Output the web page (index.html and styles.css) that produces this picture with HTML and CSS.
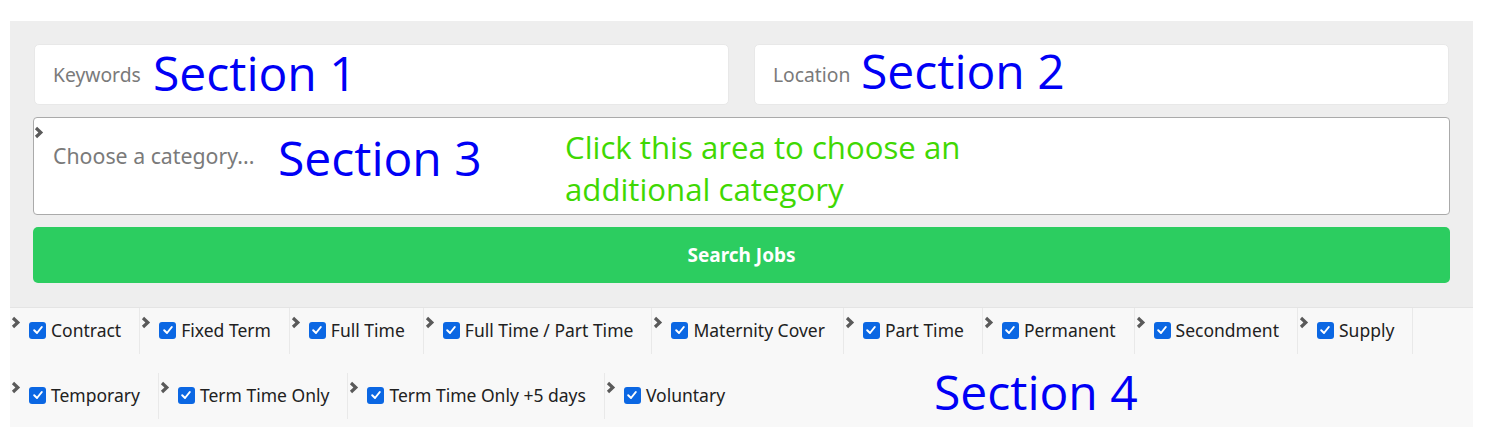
FILE: index.html
```html
<!DOCTYPE html>
<html lang="en">
<head>
<meta charset="utf-8">
<title>Job search</title>
<link rel="stylesheet" href="styles.css">
</head>
<body>
<div class="page">
  <form class="search">
    <div class="fields">
      <div class="field">
        <span class="placeholder">Keywords</span>
        <span class="note note-blue note-s1">Section 1</span>
      </div>
      <div class="field">
        <span class="placeholder">Location</span>
        <span class="note note-blue note-s2">Section 2</span>
      </div>
    </div>
    <div class="category">
      <svg class="chev" viewBox="0 0 10 13" width="10" height="13"><polyline points="2,2 6.8,6.5 2,11" /></svg>
      <span class="category-ph">Choose a category...</span>
      <span class="note note-blue note-s3">Section 3</span>
      <span class="note note-green">Click this area to choose an<br>additional category</span>
    </div>
    <button type="button" class="btn">Search Jobs</button>
  </form>
  <div class="types">
    <div class="type"><svg class="chev" viewBox="0 0 10 13" width="10" height="13"><polyline points="2,2 6.8,6.5 2,11" /></svg><span class="box"><svg viewBox="0 0 12 12" width="12" height="12"><polyline points="2.2,6.3 5,9 9.8,3" /></svg></span><span class="lbl">Contract</span></div>
    <div class="type"><svg class="chev" viewBox="0 0 10 13" width="10" height="13"><polyline points="2,2 6.8,6.5 2,11" /></svg><span class="box"><svg viewBox="0 0 12 12" width="12" height="12"><polyline points="2.2,6.3 5,9 9.8,3" /></svg></span><span class="lbl">Fixed Term</span></div>
    <div class="type"><svg class="chev" viewBox="0 0 10 13" width="10" height="13"><polyline points="2,2 6.8,6.5 2,11" /></svg><span class="box"><svg viewBox="0 0 12 12" width="12" height="12"><polyline points="2.2,6.3 5,9 9.8,3" /></svg></span><span class="lbl">Full Time</span></div>
    <div class="type"><svg class="chev" viewBox="0 0 10 13" width="10" height="13"><polyline points="2,2 6.8,6.5 2,11" /></svg><span class="box"><svg viewBox="0 0 12 12" width="12" height="12"><polyline points="2.2,6.3 5,9 9.8,3" /></svg></span><span class="lbl">Full Time / Part Time</span></div>
    <div class="type"><svg class="chev" viewBox="0 0 10 13" width="10" height="13"><polyline points="2,2 6.8,6.5 2,11" /></svg><span class="box"><svg viewBox="0 0 12 12" width="12" height="12"><polyline points="2.2,6.3 5,9 9.8,3" /></svg></span><span class="lbl">Maternity Cover</span></div>
    <div class="type"><svg class="chev" viewBox="0 0 10 13" width="10" height="13"><polyline points="2,2 6.8,6.5 2,11" /></svg><span class="box"><svg viewBox="0 0 12 12" width="12" height="12"><polyline points="2.2,6.3 5,9 9.8,3" /></svg></span><span class="lbl">Part Time</span></div>
    <div class="type"><svg class="chev" viewBox="0 0 10 13" width="10" height="13"><polyline points="2,2 6.8,6.5 2,11" /></svg><span class="box"><svg viewBox="0 0 12 12" width="12" height="12"><polyline points="2.2,6.3 5,9 9.8,3" /></svg></span><span class="lbl">Permanent</span></div>
    <div class="type"><svg class="chev" viewBox="0 0 10 13" width="10" height="13"><polyline points="2,2 6.8,6.5 2,11" /></svg><span class="box"><svg viewBox="0 0 12 12" width="12" height="12"><polyline points="2.2,6.3 5,9 9.8,3" /></svg></span><span class="lbl">Secondment</span></div>
    <div class="type"><svg class="chev" viewBox="0 0 10 13" width="10" height="13"><polyline points="2,2 6.8,6.5 2,11" /></svg><span class="box"><svg viewBox="0 0 12 12" width="12" height="12"><polyline points="2.2,6.3 5,9 9.8,3" /></svg></span><span class="lbl">Supply</span></div>
    <div class="type"><svg class="chev" viewBox="0 0 10 13" width="10" height="13"><polyline points="2,2 6.8,6.5 2,11" /></svg><span class="box"><svg viewBox="0 0 12 12" width="12" height="12"><polyline points="2.2,6.3 5,9 9.8,3" /></svg></span><span class="lbl">Temporary</span></div>
    <div class="type"><svg class="chev" viewBox="0 0 10 13" width="10" height="13"><polyline points="2,2 6.8,6.5 2,11" /></svg><span class="box"><svg viewBox="0 0 12 12" width="12" height="12"><polyline points="2.2,6.3 5,9 9.8,3" /></svg></span><span class="lbl">Term Time Only</span></div>
    <div class="type"><svg class="chev" viewBox="0 0 10 13" width="10" height="13"><polyline points="2,2 6.8,6.5 2,11" /></svg><span class="box"><svg viewBox="0 0 12 12" width="12" height="12"><polyline points="2.2,6.3 5,9 9.8,3" /></svg></span><span class="lbl">Term Time Only +5 days</span></div>
    <div class="type type-last"><svg class="chev" viewBox="0 0 10 13" width="10" height="13"><polyline points="2,2 6.8,6.5 2,11" /></svg><span class="box"><svg viewBox="0 0 12 12" width="12" height="12"><polyline points="2.2,6.3 5,9 9.8,3" /></svg></span><span class="lbl">Voluntary</span></div>
    <span class="note note-blue note-s4">Section 4</span>
  </div>
</div>
</body>
</html>
```
FILE: styles.css
```css
* { box-sizing: border-box; }

html, body {
  margin: 0;
  background: #ffffff;
}

body {
  font-family: "Noto Sans", "DejaVu Sans", sans-serif;
  color: #212121;
}

.page {
  padding: 21px 12px 0 10px;
}

.search {
  background: #eeeeee;
  padding: 23px 23px 24px 23px;
  border-bottom: 1px solid #e4e4e4;
  display: flex;
  flex-direction: column;
  gap: 12px;
}

.fields {
  display: grid;
  grid-template-columns: 1fr 1fr;
  column-gap: 25px;
  padding: 0 1px;
}

.field {
  position: relative;
  height: 61px;
  background: #ffffff;
  border: 1px solid #e8e8e8;
  border-radius: 5px;
  padding: 0 18px;
  display: flex;
  align-items: center;
}

.placeholder {
  font-size: 19.3px;
  color: #7a7a7a;
}

.category {
  position: relative;
  height: 98px;
  background: #ffffff;
  border: 1px solid #aaaaaa;
  border-radius: 4px;
  padding: 24px 19px 0 19px;
}

.category .chev {
  position: absolute;
  left: 0;
  top: 8px;
}

.category-ph {
  display: block;
  font-size: 21.3px;
  line-height: 28px;
  color: #7a7a7a;
}

.chev {
  fill: none;
  stroke: #5a5a5a;
  stroke-width: 3.2;
  stroke-linecap: butt;
  stroke-linejoin: miter;
  overflow: visible;
  flex: none;
  display: block;
}

.btn {
  height: 56px;
  border: none;
  border-radius: 5px;
  background: #2ccd60;
  color: #ffffff;
  font-family: "Noto Sans", "DejaVu Sans", sans-serif;
  font-weight: 700;
  font-size: 19px;
  cursor: pointer;
}

.types {
  position: relative;
  background: #f8f8f8;
  height: 120px;
  display: flex;
  flex-wrap: wrap;
  align-content: flex-start;
  row-gap: 19px;
}

.type {
  height: 46px;
  display: flex;
  align-items: center;
  padding: 0 18px 2px 1px;
  border-right: 1px solid #e9e9e9;
}

.type-last {
  border-right-color: transparent;
}

.type .chev {
  align-self: flex-start;
  margin-top: 8px;
  margin-right: 8px;
}

.box {
  width: 17px;
  height: 17px;
  border-radius: 3px;
  background: #0b67e3;
  display: inline-flex;
  align-items: center;
  justify-content: center;
  margin-right: 5px;
  flex: none;
}

.box svg {
  fill: none;
  stroke: #ffffff;
  stroke-width: 2;
  stroke-linecap: round;
  stroke-linejoin: round;
}

.lbl {
  font-size: 17.5px;
  white-space: nowrap;
}

.note {
  position: absolute;
  font-family: "Open Sans", "Liberation Sans", sans-serif;
  white-space: nowrap;
}

.note-blue {
  color: #0000f5;
  font-size: 48px;
  line-height: 48px;
}

.note-s1 { left: 118px; top: 4px; }
.note-s2 { left: 106px; top: 2px; }
.note-s3 { left: 244px; top: 16px; }
.note-s4 { left: 924px; top: 60px; }

.note-green {
  color: #3fd803;
  font-size: 31.2px;
  line-height: 42px;
  left: 531px;
  top: 8px;
}
```
